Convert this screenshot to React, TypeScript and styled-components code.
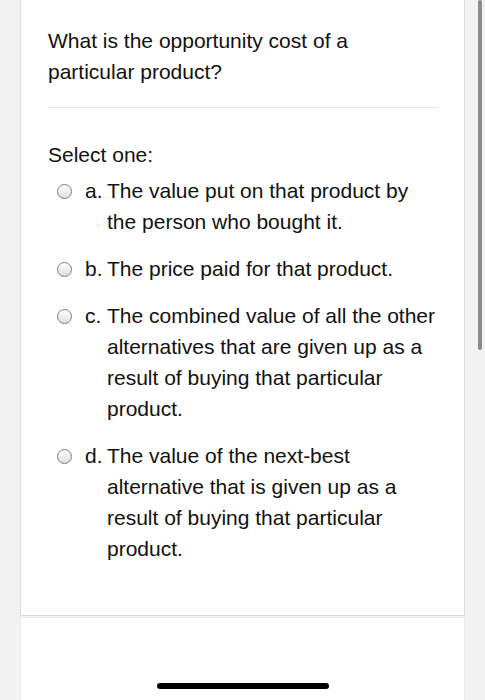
import React from 'react';
import styled, { createGlobalStyle } from 'styled-components';

const GlobalStyle = createGlobalStyle`
  html, body {
    margin: 0;
    padding: 0;
    height: 700px;
    overflow: hidden;
    background: #f2f2f2;
  }
  body {
    font-family: 'Liberation Sans', Arial, sans-serif;
    color: #111;
  }
`;

const Page = styled.div`
  padding: 0 20px;
`;

const QuestionCard = styled.div`
  background: #fff;
  border: 1px solid #dadada;
  border-top: none;
  padding: 25px 25px 51px 27px;
`;

const QuestionText = styled.p`
  margin: 0;
  font-size: 21px;
  line-height: 31px;
`;

const Rule = styled.hr`
  margin: 20px 0 31px;
  border: none;
  border-top: 1px solid #e8e8e8;
`;

const Prompt = styled.div`
  font-size: 21px;
  line-height: 31px;
`;

const Answers = styled.div`
  display: flex;
  flex-direction: column;
  gap: 16px;
  margin: 5px 0 0 10px;
`;

const Answer = styled.label`
  display: flex;
  align-items: flex-start;
  font-size: 21px;
  line-height: 31px;
`;

const Radio = styled.span`
  flex: none;
  width: 15px;
  height: 15px;
  margin-top: 9px;
  margin-left: -1px;
  box-sizing: border-box;
  border-radius: 50%;
  border: 1px solid #7e7e7e;
  background: linear-gradient(#ffffff, #dedede);
`;

const Letter = styled.span`
  flex: none;
  width: 22px;
  margin-left: 13px;
`;

const AnswerText = styled.span`
  flex: 1;
`;

const NextCard = styled.div`
  margin-top: 1px;
  height: 82px;
  background: #fff;
  border: 1px solid #ececec;
  border-bottom: none;
`;

const ScrollThumb = styled.div`
  position: fixed;
  top: 0;
  right: 3px;
  width: 4px;
  height: 350px;
  border-radius: 2px;
  background: #8a8a8a;
`;

const HomeIndicator = styled.div`
  position: fixed;
  left: 157px;
  bottom: 11px;
  width: 172px;
  height: 6px;
  border-radius: 3px;
  background: #000;
`;

const answers = [
  { letter: 'a.', text: 'The value put on that product by the person who bought it.' },
  { letter: 'b.', text: 'The price paid for that product.' },
  {
    letter: 'c.',
    text: 'The combined value of all the other alternatives that are given up as a result of buying that particular product.',
  },
  {
    letter: 'd.',
    text: 'The value of the next-best alternative that is given up as a result of buying that particular product.',
  },
];

const App = () => (
  <>
    <GlobalStyle />
    <Page>
      <QuestionCard>
        <QuestionText>What is the opportunity cost of a particular product?</QuestionText>
        <Rule />
        <Prompt>Select one:</Prompt>
        <Answers>
          {answers.map((a) => (
            <Answer key={a.letter}>
              <Radio />
              <Letter>{a.letter}</Letter>
              <AnswerText>{a.text}</AnswerText>
            </Answer>
          ))}
        </Answers>
      </QuestionCard>
      <NextCard />
    </Page>
    <ScrollThumb />
    <HomeIndicator />
  </>
);

export default App;
